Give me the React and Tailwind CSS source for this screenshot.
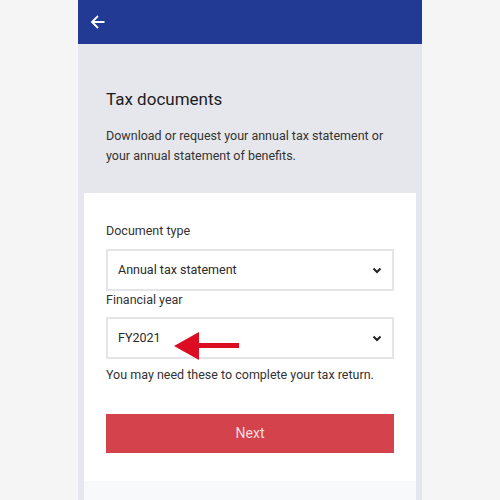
import React from "react";

function Chevron() {
  return (
    <svg width="10" height="7" viewBox="0 0 10 7" className="shrink-0">
      <path d="M1.5 1.5 L5 5 L8.5 1.5" fill="none" stroke="#222" strokeWidth="2" />
    </svg>
  );
}

function Select({ value, children }) {
  return (
    <div className="relative flex h-[42px] items-center justify-between border-2 border-[#e4e5ea] bg-white pl-[10px] pr-[10px]">
      <span className="text-[12.5px] text-[#2a2a2a]">{value}</span>
      <Chevron />
      {children}
    </div>
  );
}

export default function App() {
  return (
    <div className="flex h-[500px] w-[500px] justify-center overflow-hidden bg-[#f5f5f5]" style={{ fontFamily: "Roboto, 'Noto Sans', sans-serif" }}>
      <div className="flex w-[344px] flex-col bg-[#e6e7ec]">
        <div className="flex h-[44px] shrink-0 items-center bg-[#223a93] pl-[12px]">
          <svg width="16" height="16" viewBox="0 0 16 16">
            <path d="M14.5 8 H2 M8 2 L2 8 L8 14" fill="none" stroke="white" strokeWidth="1.8" />
          </svg>
        </div>
        <div className="px-[28px] pt-[45px]">
          <h1 className="text-[17px] font-normal leading-[20px] text-[#1d1d24]">Tax documents</h1>
          <p className="mt-[17px] text-[12.5px] leading-[20px] text-[#333]">
            Download or request your annual tax statement or your annual statement of benefits.
          </p>
        </div>
        <div className="mx-[6px] mt-[27px] bg-white px-[22px] pt-[30px] pb-[28px]">
          <div className="text-[12.5px] leading-[16px] text-[#333]">Document type</div>
          <div className="mt-[10px]">
            <Select value="Annual tax statement" />
          </div>
          <div className="mt-[1px] text-[12.5px] leading-[16px] text-[#333]">Financial year</div>
          <div className="mt-[9px]">
            <Select value="FY2021">
              <svg className="absolute left-[66px] top-[12px]" width="66" height="30" viewBox="0 0 66 30">
                <polygon points="0,15 25,1 25,29" fill="#dc0d23" />
                <rect x="24" y="12" width="41" height="5" fill="#dc0d23" />
              </svg>
            </Select>
          </div>
          <p className="mt-[8px] text-[12.5px] leading-[16px] text-[#333]">You may need these to complete your tax return.</p>
          <button className="mt-[31px] flex h-[39px] w-full items-center justify-center bg-[#d4434b] text-[14px] text-[#f7dfe0]">
            Next
          </button>
        </div>
        <div className="mx-[6px] flex-1 bg-[#f8f9fb]" />
      </div>
    </div>
  );
}
